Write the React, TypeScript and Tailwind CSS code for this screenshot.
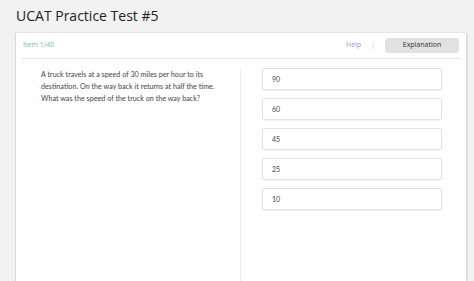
import React from "react";

const options = ["90", "60", "45", "25", "10"];

export default function App() {
  return (
    <div className="w-[474px] h-[281px] overflow-hidden bg-[#f2f2f2] font-['Open_Sans',sans-serif]">
      {/* page title */}
      <div className="h-[33px] pl-[16px] pt-[6px] text-[14px] leading-[20px] text-[#222]">UCAT Practice Test #5</div>

      {/* test card */}
      <div className="ml-[15px] w-[451px] h-[248px] bg-white border-l border-[#d6d6d6] shadow-[1px_0_2px_rgba(0,0,0,0.15)] flex flex-col">
        <div className="mx-[5px] h-[26px] border-b border-[#e6e6e6] flex items-center">
          <span className="ml-[2px] text-[7px] text-[#82b8a4]">Item 1/40</span>
          <span className="ml-auto text-[7px] text-[#a893cf]">Help</span>
          <span className="mx-[10px] text-[7px] text-[#cccccc]">|</span>
          <button className="w-[74px] h-[15px] mr-[2px] rounded-[3px] bg-[#e1e1e1] text-[7px] text-[#333]">Explanation</button>
        </div>

        <div className="flex flex-1">
          <div className="w-[224px] pl-[25px] pt-[10px]">
            <p className="w-[184px] text-[7.2px] leading-[12px] text-[#444] font-['Lato',sans-serif]">
              A truck travels at a speed of 30 miles per hour to its destination. On the way back it returns at half the time. What was the speed of the truck on the way back?
            </p>
          </div>
          <div className="mt-[9px] border-l border-[#ececec] flex-1 pl-[21px] flex flex-col gap-[8px]">
            {options.map((o) => (
              <div key={o} className="w-[180px] h-[22px] bg-white border border-[#e2e2e2] rounded-[2px] shadow-[0_1px_1px_rgba(0,0,0,0.05)] flex items-center pl-[9px] text-[7px] text-[#444] font-['Lato',sans-serif]">
                {o}
              </div>
            ))}
          </div>
        </div>
      </div>
    </div>
  );
}
